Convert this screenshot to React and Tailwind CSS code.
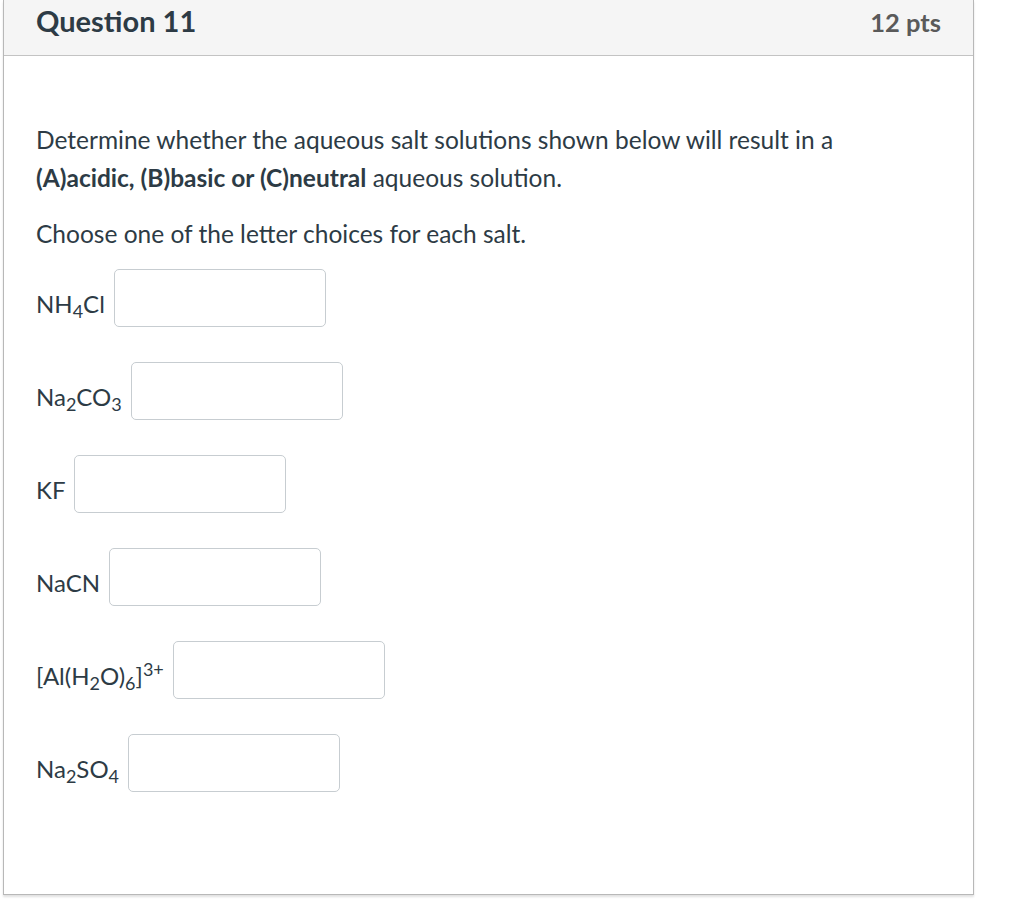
import React from "react";

const rows = [
  { key: "nh4cl", label: (<>NH<sub>4</sub>Cl</>) },
  { key: "na2co3", label: (<>Na<sub>2</sub>CO<sub>3</sub></>) },
  { key: "kf", label: (<>KF</>) },
  { key: "nacn", label: (<>NaCN</>) },
  { key: "al", label: (<>[Al(H<sub>2</sub>O)<sub>6</sub>]<sup>3+</sup></>) },
  { key: "na2so4", label: (<>Na<sub>2</sub>SO<sub>4</sub></>) },
];

export default function App() {
  return (
    <div className="w-[1024px] h-[914px] bg-white" style={{ fontFamily: "Lato, 'Open Sans', sans-serif" }}>
      <div className="ml-[3px] w-[971px] border border-t-0 border-[#b8b8b8] shadow-[0_2px_2px_rgba(0,0,0,0.12)]">
        <div className="h-[56px] bg-[#f5f5f5] border-b border-[#c3c3c3] flex items-baseline justify-between pl-[32px] pr-[32px] pt-[3px]">
          <div className="text-[29px] leading-[36px] font-bold text-[#2d3b45]">Question 11</div>
          <div className="text-[25.5px] leading-[36px] font-bold text-[#5a5a5a]">12 pts</div>
        </div>
        <div className="pl-[32px] pr-[32px] pt-[65px] pb-[102px] text-[24.5px] leading-[38px] text-[#2d3b45]">
          <p>
            Determine whether the aqueous salt solutions shown below will result in a<br />
            <span className="font-bold">(A)acidic, (B)basic or (C)neutral</span> aqueous solution.
          </p>
          <p className="mt-[18px]">Choose one of the letter choices for each salt.</p>
          <div className="mt-[16px] flex flex-col gap-[35px]">
            {rows.map((r) => (
              <div key={r.key} className="flex items-center gap-[9px] text-[24px]">
                <span className="pt-[12px] whitespace-nowrap">{r.label}</span>
                <input
                  type="text"
                  className="w-[212px] h-[58px] border border-[#c7cdd1] rounded-[5px] bg-white outline-none"
                />
              </div>
            ))}
          </div>
        </div>
      </div>
    </div>
  );
}
